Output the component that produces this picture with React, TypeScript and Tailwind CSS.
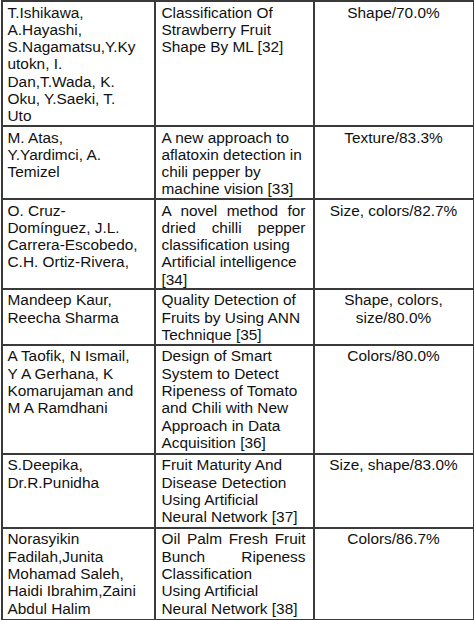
import React from 'react';

type Line = string | { text: string; justify: true };

type Row = {
  h: string;
  authors: string[];
  title: Line[];
  result: string[];
};

const rows: Row[] = [
  {
    h: 'h-[125px]',
    authors: ['T.Ishikawa,', 'A.Hayashi,', 'S.Nagamatsu,Y.Ky', 'utokn, I.', 'Dan,T.Wada, K.', 'Oku, Y.Saeki, T.', 'Uto'],
    title: ['Classification Of', 'Strawberry Fruit', 'Shape By ML [32]'],
    result: ['Shape/70.0%'],
  },
  {
    h: 'h-[73px]',
    authors: ['M. Atas,', 'Y.Yardimci, A.', 'Temizel'],
    title: ['A new approach to', 'aflatoxin detection in', 'chili pepper by', 'machine vision [33]'],
    result: ['Texture/83.3%'],
  },
  {
    h: 'h-[89px]',
    authors: ['O. Cruz-', 'Domínguez, J.L.', 'Carrera-Escobedo,', 'C.H. Ortiz-Rivera,'],
    title: [
      { text: 'A novel method for', justify: true },
      { text: 'dried chilli pepper', justify: true },
      'classification using',
      'Artificial intelligence',
      '[34]',
    ],
    result: ['Size, colors/82.7%'],
  },
  {
    h: 'h-[56px]',
    authors: ['Mandeep Kaur,', 'Reecha Sharma'],
    title: ['Quality Detection of', 'Fruits by Using ANN', 'Technique [35]'],
    result: ['Shape, colors,', 'size/80.0%'],
  },
  {
    h: 'h-[109px]',
    authors: ['A Taofik, N Ismail,', 'Y A Gerhana, K', 'Komarujaman and', 'M A Ramdhani'],
    title: ['Design of Smart', 'System to Detect', 'Ripeness of Tomato', 'and Chili with New', 'Approach in Data', 'Acquisition [36]'],
    result: ['Colors/80.0%'],
  },
  {
    h: 'h-[74px]',
    authors: ['S.Deepika,', 'Dr.R.Punidha'],
    title: ['Fruit Maturity And', 'Disease Detection', 'Using Artificial', 'Neural Network [37]'],
    result: ['Size, shape/83.0%'],
  },
  {
    h: 'h-[92px]',
    authors: ['Norasyikin', 'Fadilah,Junita', 'Mohamad Saleh,', 'Haidi Ibrahim,Zaini', 'Abdul Halim'],
    title: [
      { text: 'Oil Palm Fresh Fruit', justify: true },
      { text: 'Bunch Ripeness', justify: true },
      'Classification',
      'Using Artificial',
      'Neural Network [38]',
    ],
    result: ['Colors/86.7%'],
  },
];

const App: React.FC = () => (
  <div className="w-[474px] h-[620px] bg-white overflow-hidden">
    <table className="ml-[0.5px] w-[472px] table-fixed border-collapse border-2 border-[#3a3a3a] font-['Liberation_Sans',Arial,sans-serif] text-[15.4px] leading-[17.3px] text-[#111]">
      <colgroup>
        <col className="w-[153px]" />
        <col className="w-[159px]" />
        <col className="w-[160px]" />
      </colgroup>
      <tbody>
        {rows.map((r, i) => (
          <tr key={i}>
            <td className={`${r.h} align-top border-2 border-[#3a3a3a] pl-[5px] pt-[1.5px] whitespace-nowrap`}>
              {r.authors.map((a, j) => (
                <div key={j}>{a}</div>
              ))}
            </td>
            <td className={`${r.h} align-top border-2 border-[#3a3a3a] pl-[6px] pr-[7px] pt-[1.5px] whitespace-nowrap`}>
              {r.title.map((t, j) =>
                typeof t === 'string' ? (
                  <div key={j}>{t}</div>
                ) : (
                  <div key={j} className="text-justify [text-align-last:justify]">
                    {t.text}
                  </div>
                ),
              )}
            </td>
            <td className={`${r.h} align-top border-2 border-[#3a3a3a] text-center pt-[1.5px]`}>
              {r.result.map((s, j) => (
                <div key={j}>{s}</div>
              ))}
            </td>
          </tr>
        ))}
      </tbody>
    </table>
  </div>
);

export default App;
